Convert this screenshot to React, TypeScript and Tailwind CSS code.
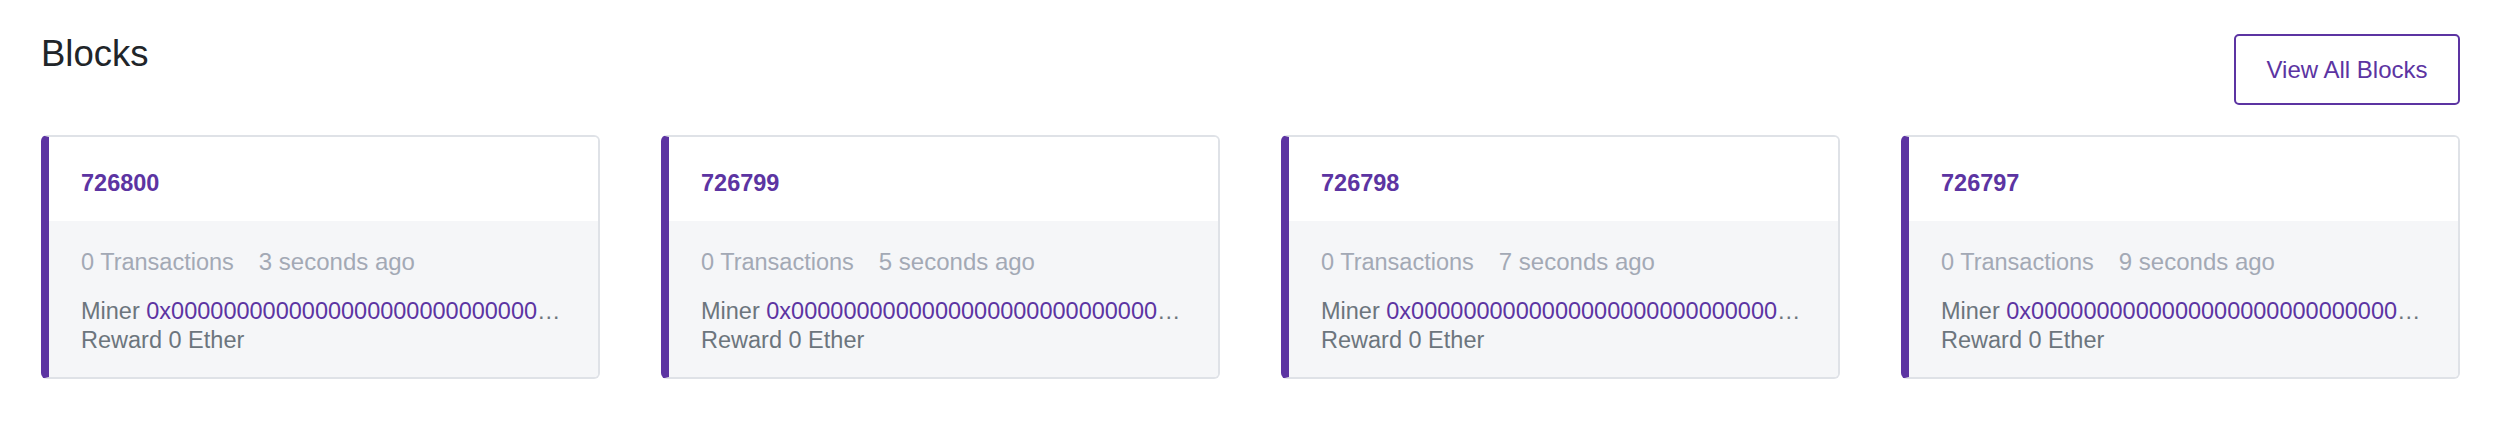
import React from "react";

const blocks = [
  { n: "726800", t: "3 seconds ago" },
  { n: "726799", t: "5 seconds ago" },
  { n: "726798", t: "7 seconds ago" },
  { n: "726797", t: "9 seconds ago" },
];

const miner = "0x0000000000000000000000000000000000000000";

export default function App() {
  return (
    <div
      className="w-[2498px] h-[426px] bg-white pl-[41px] pr-[38px] pt-[32px]"
      style={{ fontFamily: '"Liberation Sans", Arial, sans-serif' }}
    >
      <div className="flex justify-between items-start">
        <h2 className="text-[36.5px] leading-[43px] text-[#212529] font-normal">Blocks</h2>
        <a className="mt-[2px] h-[71px] w-[226px] flex items-center justify-center border-[2px] border-[#5c34a2] rounded-[5px] text-[#5c34a2] text-[24px]">
          View All Blocks
        </a>
      </div>
      <div className="grid grid-cols-4 gap-[61px] mt-[30px]">
        {blocks.map((b) => (
          <div
            key={b.n}
            className="h-[244px] rounded-[6px] border-[2px] border-[#dfe2e7] border-l-[8px] border-l-[#5c34a2] overflow-hidden flex flex-col"
          >
            <div className="h-[84px] bg-white pt-[29px] pl-[32px] text-[23.5px] leading-[35px] font-bold text-[#5c34a2]">
              {b.n}
            </div>
            <div className="flex-1 bg-[#f5f6f8] pt-[26px] pl-[32px] pr-[30px] text-[23.5px] leading-[29px]">
              <div className="text-[#a3a9b5] mb-[20px] whitespace-nowrap">
                <span className="mr-[25px]">0 Transactions</span>
                <span className="text-[24px]">{b.t}</span>
              </div>
              <div className="text-[#6c757d] truncate">
                Miner <span className="text-[#5c34a2]">{miner}</span>
              </div>
              <div className="text-[#6c757d]">Reward 0 Ether</div>
            </div>
          </div>
        ))}
      </div>
    </div>
  );
}
